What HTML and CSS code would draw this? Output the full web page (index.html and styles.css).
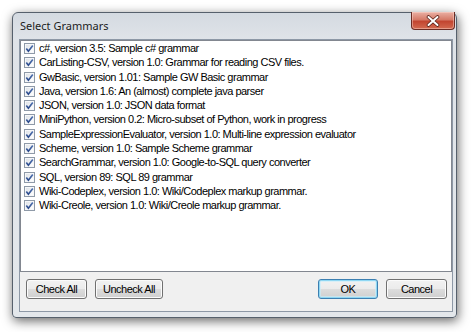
FILE: index.html
```html
<!DOCTYPE html>
<html>
<head>
<meta charset="utf-8">
<link rel="stylesheet" href="styles.css">
</head>
<body>
<svg class="defs" width="0" height="0">
  <defs>
    <linearGradient id="cbg" x1="0" y1="0" x2="1" y2="1">
      <stop offset="0" stop-color="#dfe3e8"/>
      <stop offset="1" stop-color="#ffffff"/>
    </linearGradient>
    <linearGradient id="chk" x1="0" y1="0" x2="0" y2="1">
      <stop offset="0" stop-color="#5274b2"/>
      <stop offset="1" stop-color="#29488a"/>
    </linearGradient>
    <symbol id="cb" viewBox="0 0 11 11">
      <rect x="0.5" y="0.5" width="10" height="10" fill="#f6f7f9" stroke="#8f9aa8"/>
      <rect x="2" y="2" width="7" height="7" fill="url(#cbg)"/>
      <path d="M2.3 5.4 L4.4 8.2 L8.8 2.4" fill="none" stroke="url(#chk)" stroke-width="1.7"/>
    </symbol>
  </defs>
</svg>
<div class="window">
  <div class="titlebar">
    <span class="title">Select Grammars</span>
    <div class="close">
      <svg width="14" height="12" viewBox="0 0 14 12">
        <path d="M2.5 2 L11.5 10 M11.5 2 L2.5 10" stroke="#5a2118" stroke-width="3.6" stroke-linecap="round"/>
        <path d="M2.5 2 L11.5 10 M11.5 2 L2.5 10" stroke="#ffffff" stroke-width="2" stroke-linecap="round"/>
      </svg>
    </div>
  </div>
  <div class="client">
    <ul class="list">
      <li><svg class="cb"><use href="#cb"/></svg>c#, version 3.5: Sample c# grammar</li>
      <li><svg class="cb"><use href="#cb"/></svg>CarListing-CSV, version 1.0: Grammar for reading CSV files.</li>
      <li><svg class="cb"><use href="#cb"/></svg>GwBasic, version 1.01: Sample GW Basic grammar</li>
      <li><svg class="cb"><use href="#cb"/></svg>Java, version 1.6: An (almost) complete java parser</li>
      <li><svg class="cb"><use href="#cb"/></svg>JSON, version 1.0: JSON data format</li>
      <li><svg class="cb"><use href="#cb"/></svg>MiniPython, version 0.2: Micro-subset of Python, work in progress</li>
      <li><svg class="cb"><use href="#cb"/></svg>SampleExpressionEvaluator, version 1.0: Multi-line expression evaluator</li>
      <li><svg class="cb"><use href="#cb"/></svg>Scheme, version 1.0: Sample Scheme grammar</li>
      <li><svg class="cb"><use href="#cb"/></svg>SearchGrammar, version 1.0: Google-to-SQL query converter</li>
      <li><svg class="cb"><use href="#cb"/></svg>SQL, version 89: SQL 89 grammar</li>
      <li><svg class="cb"><use href="#cb"/></svg>Wiki-Codeplex, version 1.0: Wiki/Codeplex markup grammar.</li>
      <li><svg class="cb"><use href="#cb"/></svg>Wiki-Creole, version 1.0: Wiki/Creole markup grammar.</li>
    </ul>
    <div class="buttons">
      <div class="btn w61">Check All</div>
      <div class="btn w68">Uncheck All</div>
      <div class="spacer"></div>
      <div class="btn w60 default">OK</div>
      <div class="btn w61">Cancel</div>
    </div>
  </div>
</div>
</body>
</html>
```
FILE: styles.css
```css
html, body {
  margin: 0;
  padding: 0;
  background: #ffffff;
  width: 474px;
  height: 332px;
  overflow: hidden;
}
.defs {
  position: absolute;
  width: 0;
  height: 0;
}
.window {
  margin: 12px 0 0 12px;
  width: 434px;
  height: 299px;
  padding: 0 3px 5px 6px;
  border: 1px solid #56606c;
  border-radius: 6px 6px 4px 4px;
  background: linear-gradient(to bottom, #d4dae1 0px, #dfe3e8 26px, #e3e7eb 100%);
  box-shadow: 1px 3px 11px rgba(0, 0, 0, 0.6);
  display: flex;
  flex-direction: column;
  box-sizing: content-box;
}
.titlebar {
  height: 26px;
  display: flex;
  align-items: flex-start;
  justify-content: space-between;
}
.title {
  font-family: "Noto Sans", sans-serif;
  font-size: 11px;
  color: #1c1c1c;
  margin: 5px 0 0 1px;
}
.close {
  width: 42px;
  height: 17px;
  margin: -1px -2px 0 0;
  border: 1px solid #6b2c24;
  border-top: none;
  border-radius: 0 0 4px 4px;
  background: linear-gradient(to bottom, #eab0a4 0%, #d57a68 45%, #c24530 55%, #d36a50 100%);
  box-shadow: inset 0 0 0 1px rgba(255, 220, 210, 0.45);
  display: flex;
  align-items: center;
  justify-content: center;
}
.client {
  flex: 1;
  border: 1px solid #8d98a6;
  background: #f0f0f0;
  display: flex;
  flex-direction: column;
}
.list {
  list-style: none;
  margin: 0;
  padding: 0;
  height: 230px;
  border: 1px solid #828790;
  background: #ffffff;
  font-family: "Liberation Sans", Arial, sans-serif;
  font-size: 11px;
  letter-spacing: -0.5px;
  color: #000000;
}
.list li {
  height: 14.27px;
  display: flex;
  align-items: center;
  white-space: nowrap;
}
.cb {
  width: 11px;
  height: 11px;
  margin: 1px 4px 0 3px;
  flex: none;
}
.buttons {
  flex: 1;
  display: flex;
  align-items: flex-start;
  gap: 8px;
  padding: 7px 5px 0 6px;
}
.spacer {
  flex: 1;
}
.btn {
  height: 18px;
  box-sizing: content-box;
  border: 1px solid #707070;
  border-radius: 3px;
  background: linear-gradient(to bottom, #f2f2f2 0%, #ebebeb 50%, #dddddd 50%, #cfcfcf 100%);
  box-shadow: inset 0 0 0 1px #fbfbfb;
  font-family: "Liberation Sans", Arial, sans-serif;
  font-size: 11px;
  letter-spacing: -0.5px;
  color: #000000;
  display: flex;
  align-items: center;
  justify-content: center;
}
.w60 { width: 58px; }
.w61 { width: 59px; }
.w68 { width: 66px; }
.btn.default {
  border-color: #3c7fb1;
  box-shadow: inset 0 0 0 1px #8fd7f3, inset 0 0 0 2px rgba(200, 238, 252, 0.6);
}
```
